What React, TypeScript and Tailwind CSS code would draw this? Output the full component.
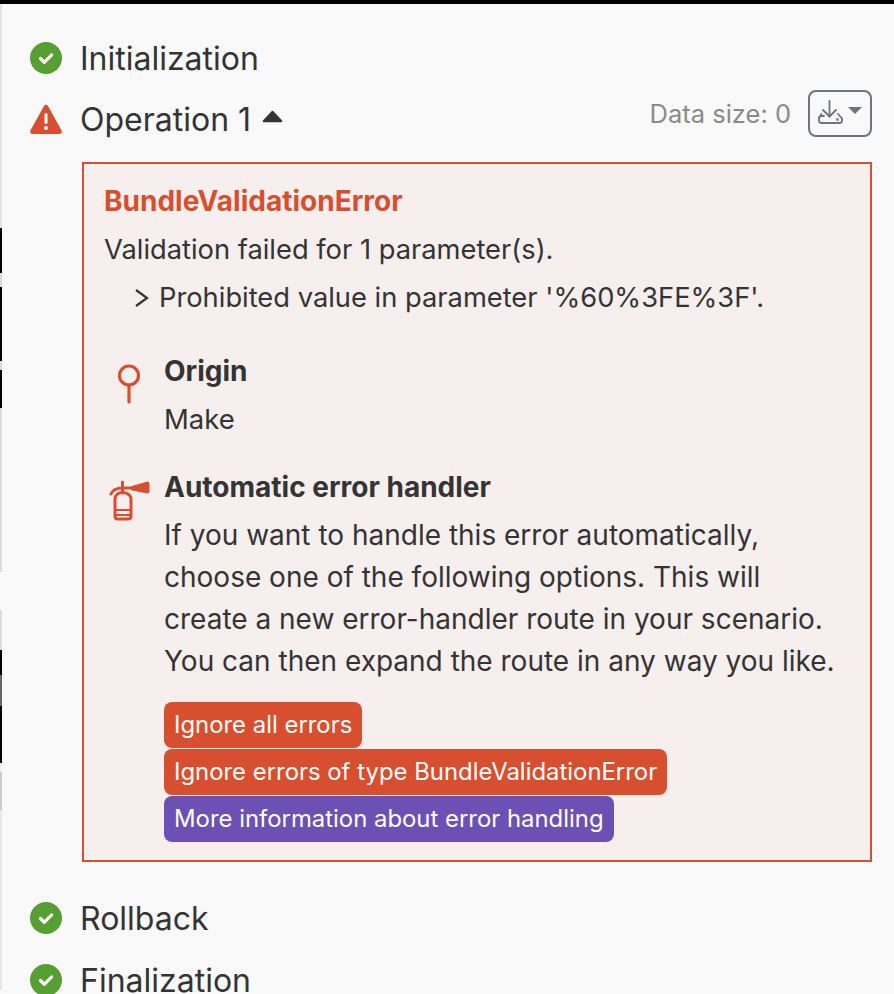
import React from 'react';

const RED = '#d84f2f';

const CheckIcon = () => (
  <svg width="32" height="32" viewBox="0 0 32 32" className="shrink-0">
    <circle cx="16" cy="16" r="16" fill="#559f33" />
    <path d="M10.500 16.500l3.800 3.800 7.400-7.400" fill="none" stroke="#fff" strokeWidth="3.200" strokeLinecap="round" strokeLinejoin="round" />
  </svg>
);

const WarnIcon = () => (
  <svg width="32" height="29" viewBox="0 0 32 29" className="shrink-0">
    <path d="M16 0c1 0 1.800.5 2.300 1.400l13.300 24c.9 1.600-.2 3.600-2.100 3.600H2.500C.6 29-.5 27 .4 25.400l13.300-24C14.200.5 15 0 16 0z" fill={RED} />
    <rect x="14.500" y="8" width="3" height="11" rx="1.500" fill="#fff" />
    <circle cx="16" cy="23" r="2" fill="#fff" />
  </svg>
);

const DownloadIcon = () => (
  <svg width="26" height="26" viewBox="0 0 26 26" fill="none" stroke="#6c757d" strokeWidth="1.800" strokeLinecap="round" strokeLinejoin="round">
    <path d="M12.500 1v15.500" />
    <path d="M6 10l6.500 6.500L19 10" />
    <path d="M7 16H4.500C3 16 2 17 2 18.500v2C2 22 3 23 4.500 23h18c1.500 0 2.500-1 2.500-2.500v-2" />
    <path d="M21 14l4 4.500" />
    <path d="M2.500 17L4.500 14" />
    <circle cx="20.500" cy="19.500" r=".5" />
  </svg>
);

const OriginIcon = () => (
  <svg width="24" height="42" viewBox="0 0 24 42" fill="none" stroke={RED} strokeWidth="3.200" strokeLinecap="round">
    <circle cx="12" cy="12.500" r="9.500" />
    <path d="M12 22v17" />
  </svg>
);

const ExtinguisherIcon = () => (
  <svg width="42" height="42" viewBox="0 0 42 42" fill="none" stroke={RED} strokeWidth="3" strokeLinecap="round" strokeLinejoin="round">
    <path d="M2 14c1.500-3.500 5.500-6 11.500-6h9" />
    <path d="M13.500 2v11" />
    <path d="M6 31V19c0-4 3.500-6.500 7.500-6.500S22 15 22 19v17c0 2-1 3-3 3H9c-2 0-3-1-3-3z" />
    <path d="M7 30h14M7 35h14" strokeWidth="2" />
    <path d="M23 6.500L38.500 2c1 0 1.500.6 1.500 1.500v8c0 1-.6 1.600-1.500 1.500L23 10z" fill={RED} strokeWidth="1" />
  </svg>
);

const Step = ({ label, className }: { label: string; className: string }) => (
  <div className={`flex items-center gap-[18px] ${className}`}>
    <CheckIcon />
    <span className="pt-[2px] text-[32px] leading-[40px]">{label}</span>
  </div>
);

const ActionButton = ({ label, bg }: { label: string; bg: string }) => (
  <button type="button" className={`h-[46px] rounded-[8px] px-[10px] text-[23.900px] leading-[46px] text-white whitespace-nowrap ${bg}`}>{label}</button>
);

const EDGE = [
  'h-[224px] bg-[#e3e3e3]',
  'h-[45px] bg-black',
  'h-[14px] bg-[#d8d8d8]',
  'h-[74px] bg-black',
  'h-[9px] bg-[#d8d8d8]',
  'h-[38px] bg-black',
  'h-[164px] bg-[#dcdcdc]',
  'h-[38px] bg-[#f9f9f9]',
  'h-[40px] bg-[#dcdcdc]',
  'h-[25px] bg-black',
  'h-[31px] bg-[#666666]',
  'h-[57px] bg-black',
  'h-[9px] bg-[#f0f0f0]',
  'h-[38px] bg-[#cccccc]',
  'h-[180px] bg-[#e6e6e6]',
];

export default function App() {
  return (
    <div className="w-[894px] h-[994px] overflow-hidden bg-[#f9f9f9] flex flex-col font-['Inter',sans-serif] text-[#343434]">
      <div className="h-[4px] bg-black shrink-0" />
      <div className="flex flex-1 min-h-0">
        <div className="w-[2px] shrink-0 flex flex-col">
          {EDGE.map((c, i) => <div key={i} className={`shrink-0 ${c}`} />)}
        </div>
        <div className="flex-1 pl-[28px] pr-[22px] pt-[34px]">
          <Step label="Initialization" className="h-[40px]" />

          <div className="mt-[21px] h-[40px] flex items-center">
            <div className="w-[32px] shrink-0"><WarnIcon /></div>
            <span className="ml-[18px] pt-[2px] text-[32px] leading-[40px]">Operation 1</span>
            <svg width="21" height="13" viewBox="0 0 21 13" className="ml-[11px] mb-[5px]">
              <path d="M10.500 2L19 11H2z" fill="#343434" stroke="#343434" strokeWidth="2.500" strokeLinejoin="round" />
            </svg>
            <div className="ml-auto flex items-center gap-[17px] mb-[12px]">
              <span className="text-[25.500px] leading-[32px] text-[#8a8a8a] relative top-[1px]">Data size: 0</span>
              <button type="button" className="w-[64px] h-[47px] rounded-[8px] border-2 border-[#6c757d] flex items-center pl-[7px]">
                <DownloadIcon />
                <svg width="14" height="7" viewBox="0 0 14 7" className="ml-[5px] mb-[6px]"><path d="M0 0h14L7 7z" fill="#6c757d" /></svg>
              </button>
            </div>
          </div>

          <div className="ml-[52px] mt-[23px] h-[700px] border-2 border-[#d84f2f] bg-[#f6efee] pl-[20px] pr-[20px] pt-[21px]">
            <h2 className="text-[28px] leading-[32px] font-bold text-[#d84f2f]">BundleValidationError</h2>
            <p className="mt-[13px] text-[27.300px] leading-[40px] whitespace-nowrap">Validation failed for 1 parameter(s).</p>
            <div className="mt-[8px] ml-[30px] flex items-center text-[27.300px] leading-[40px] whitespace-nowrap">
              <svg width="16" height="20" viewBox="0 0 16 20" fill="none" stroke="#343434" strokeWidth="2.200" className="mr-[9px]"><path d="M2 2l11 8-11 8" /></svg>
              Prohibited value in parameter '%60%3FE%3F'.
            </div>

            <div className="mt-[33px] flex">
              <div className="w-[60px] shrink-0 pl-[13px] pt-[12px]"><OriginIcon /></div>
              <div>
                <h3 className="text-[28px] leading-[40px] font-bold">Origin</h3>
                <p className="mt-[8px] text-[27.500px] leading-[40px]">Make</p>
              </div>
            </div>

            <div className="mt-[28px] flex">
              <div className="w-[60px] shrink-0 pl-[5px] pt-[13px]"><ExtinguisherIcon /></div>
              <div>
                <h3 className="text-[28px] leading-[40px] font-bold">Automatic error handler</h3>
                <p className="mt-[7px] text-[28px] leading-[42px] whitespace-nowrap">
                  If you want to handle this error automatically,<br />
                  choose one of the following options. This will<br />
                  create a new error-handler route in your scenario.<br />
                  You can then expand the route in any way you like.
                </p>
                <div className="mt-[20px] flex flex-col items-start gap-[1px]">
                  <ActionButton label="Ignore all errors" bg="bg-[#d84f2f]" />
                  <ActionButton label="Ignore errors of type BundleValidationError" bg="bg-[#d84f2f]" />
                  <ActionButton label="More information about error handling" bg="bg-[#6c50b4]" />
                </div>
              </div>
            </div>
          </div>

          <Step label="Rollback" className="mt-[36px] h-[40px]" />
          <Step label="Finalization" className="mt-[22px] h-[40px]" />
        </div>
      </div>
    </div>
  );
}
